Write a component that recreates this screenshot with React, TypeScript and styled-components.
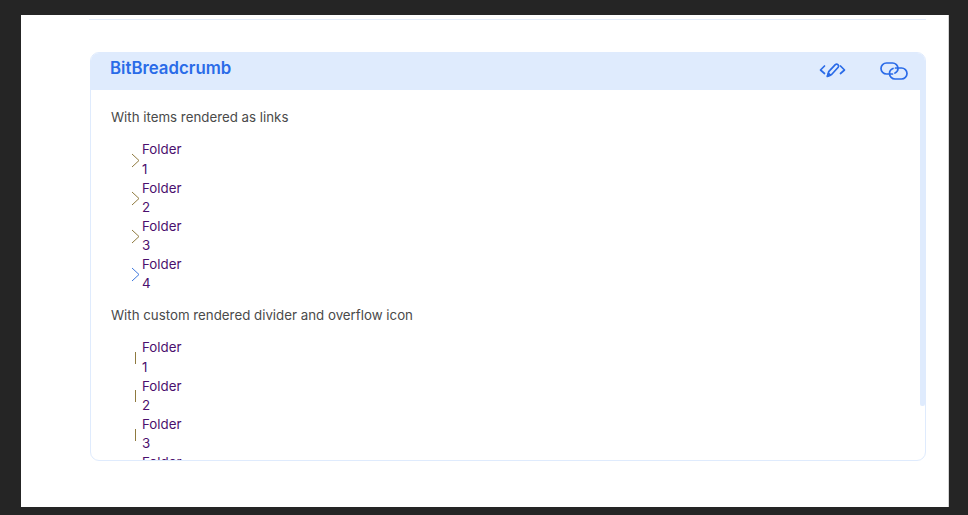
import React from "react";
import styled, { createGlobalStyle } from "styled-components";

const Global = createGlobalStyle`
  html, body { margin: 0; padding: 0; height: 100%; background: #252525; overflow: hidden; }
  body { font-family: "Inter", "Liberation Sans", sans-serif; }
`;
const Page = styled.div`
  box-sizing: border-box;
  width: 968px;
  height: 515px;
  padding: 15px 19px 8px 21px;
`;
const Sheet = styled.main`
  box-sizing: border-box;
  height: 492px;
  background: #fff;
  border-right: 1px solid #d4d4d4;
  padding: 4px 22px 0 68px;
`;
const Rule = styled.div`
  height: 1px;
  background: #e4edfb;
  margin-bottom: 32px;
`;
const Card = styled.section`
  box-sizing: border-box;
  height: 409px;
  margin-left: 1px;
  border: 1px solid #dfebfd;
  border-radius: 9px;
  overflow: hidden;
  display: flex;
  flex-direction: column;
`;
const Header = styled.header`
  flex: none;
  box-sizing: border-box;
  height: 37px;
  background: #dfebfd;
  display: flex;
  align-items: center;
  justify-content: space-between;
  padding: 0 17px 7px 19px;
`;
const Title = styled.h2`
  margin: 0;
  font-size: 16.8px;
  font-weight: 600;
  color: #2a6be8;
`;
const Actions = styled.div`
  display: flex;
  align-items: center;
  gap: 34px;
  transform: translateY(2px);
`;
const Body = styled.div`
  flex: 1;
  min-height: 0;
  position: relative;
  overflow: hidden;
  padding: 18.4px 20px;
`;
const Thumb = styled.div`
  position: absolute;
  top: 0;
  right: 0;
  width: 5px;
  height: 316px;
  border-radius: 0 0 2px 2px;
  background: #dfebfd;
`;
const Caption = styled.p`
  margin: 0;
  font-size: 13.3px;
  line-height: 19px;
  color: #4a4a4a;
`;
const Crumbs = styled.ol`
  list-style: none;
  margin: 13px 0 12.8px;
  padding: 0 0 0 20px;
`;
const Crumb = styled.li`
  display: flex;
  align-items: center;
  height: 38.3px;
`;
const Divider = styled.span<{ $color: string; $inset: number }>`
  flex: none;
  box-sizing: border-box;
  width: 11px;
  height: 16px;
  margin-top: 1px;
  padding-left: ${(p) => p.$inset}px;
  display: flex;
  align-items: center;
  color: ${(p) => p.$color};
`;
const Link = styled.a`
  width: 42px;
  font-size: 13.3px;
  line-height: 19.15px;
  color: #4b0f6e;
`;

const Chevron = () => (
  <svg width="9" height="15" viewBox="0 0 9 15" fill="none" stroke="currentColor" strokeWidth="1">
    <path d="M1 1l7 6.5-7 6.5" />
  </svg>
);
const Bar = () => (
  <svg width="1" height="12" viewBox="0 0 1 12" fill="none" stroke="currentColor" strokeWidth="1">
    <path d="M.5 0v12" />
  </svg>
);
const CodeEdit = () => (
  <svg width="27" height="18" viewBox="0 0 27 18" fill="none" stroke="#2a6be8" strokeWidth="1.7" strokeLinejoin="round" strokeLinecap="round">
    <path d="M5.5 5L1.5 9 5.5 12.5M21.5 5L25.5 9 21.5 12.5" />
    <path d="M8.5 15l1.2-4.4 6.6-7a2 2 0 0 1 2.9 2.7l-6.6 7.2z" />
    <path d="M8.3 15.4l1.3-3 1.9 1.7z" fill="#2a6be8" />
  </svg>
);
const LinkIcon = () => (
  <svg width="28" height="19" viewBox="0 0 28 19" fill="none" stroke="#2a6be8" strokeWidth="1.7" strokeLinecap="round">
    <path d="M12.5 13H6.5a5.5 5.5 0 0 1 0-11H12.5a5.5 5.5 0 0 1 5.5 5.5c0 2-1.2 3.6-3 4.5" />
    <path d="M15.5 7H21.5a5.5 5.5 0 0 1 0 11H15a5.5 5.5 0 0 1-5.5-5.5c0-2.4 1.6-4.3 3.5-5" />
  </svg>
);

const BreadcrumbList = ({ divider, inset, last }: { divider: React.ReactNode; inset: number; last: string }) => (
  <Crumbs>
    {[1, 2, 3, 4].map((n) => (
      <Crumb key={n}>
        <Divider $inset={inset} $color={n === 4 ? last : "#8f7a3f"}>{divider}</Divider>
        <Link>Folder {n}</Link>
      </Crumb>
    ))}
  </Crumbs>
);

export default function App() {
  return (
    <Page>
      <Global />
      <Sheet>
        <Rule />
        <Card>
          <Header>
            <Title>BitBreadcrumb</Title>
            <Actions>
              <CodeEdit />
              <LinkIcon />
            </Actions>
          </Header>
          <Body>
            <Thumb />
            <Caption>With items rendered as links</Caption>
            <BreadcrumbList divider={<Chevron />} inset={0} last="#3f78dc" />
            <Caption>With custom rendered divider and overflow icon</Caption>
            <BreadcrumbList divider={<Bar />} inset={4} last="#6f7f4a" />
          </Body>
        </Card>
      </Sheet>
    </Page>
  );
}
